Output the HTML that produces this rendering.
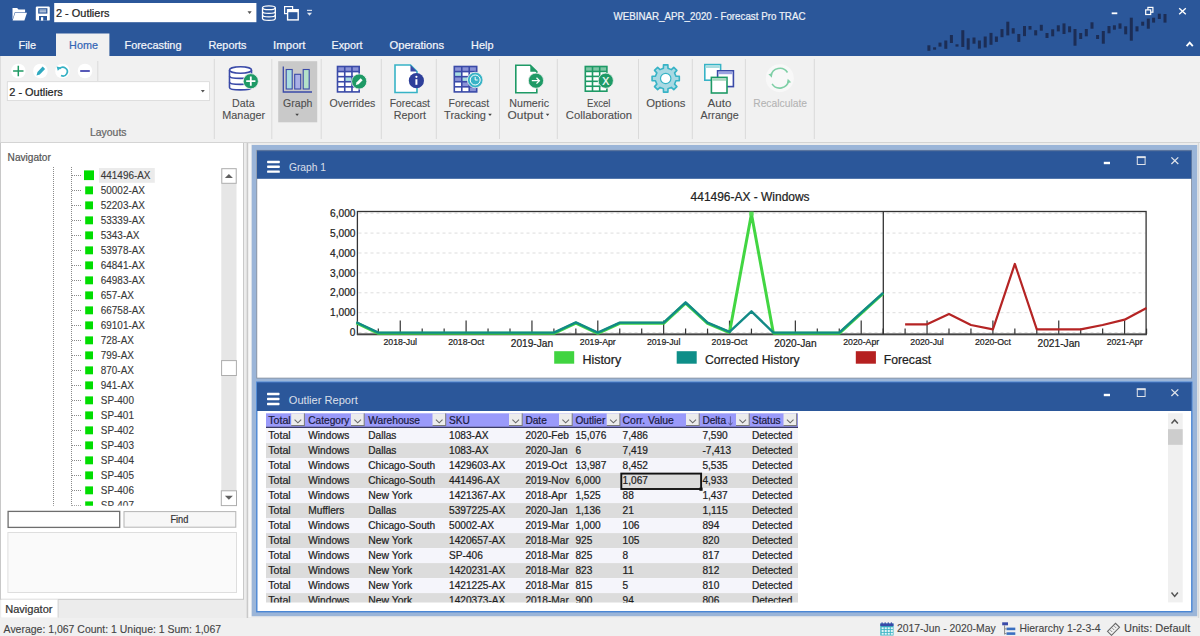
<!DOCTYPE html><html><head><meta charset="utf-8"><title>Forecast Pro TRAC</title><style>*{margin:0;padding:0}html,body{width:1200px;height:636px;overflow:hidden;background:#f0f0f0}svg{position:absolute;left:0;top:0;display:block}text{font-family:"Liberation Sans",sans-serif;white-space:pre}</style></head><body>
<svg width="1200" height="636" viewBox="0 0 1200 636">
<rect x="0" y="0" width="1200" height="56" fill="#2b579a"/>
<path d="M12.5,8 h4.6 l1.4,1.6 h6.6 v2.6 h-10.3 l-2.3,7.6 z" fill="#fff"/>
<path d="M15.2,12.8 h11.8 l-2.6,7.8 h-11.8 z" fill="#fff"/>
<rect x="35.8" y="6.6" width="14" height="14" fill="#ffffff" rx="1.2"/>
<rect x="38.2" y="8.2" width="9.2" height="5.4" fill="#2b579a"/>
<rect x="39.4" y="9.6" width="6.8" height="0.9" fill="#ffffff"/>
<rect x="39.4" y="11.4" width="6.8" height="0.9" fill="#ffffff"/>
<rect x="39" y="16" width="8" height="4.6" fill="#2b579a"/>
<rect x="41" y="17.2" width="2.2" height="3.4" fill="#ffffff"/>
<rect x="54.2" y="3" width="202.2" height="19.2" fill="#ffffff"/>
<text x="56" y="17.1" font-size="11" fill="#1e1e1e" stroke="#1e1e1e" stroke-width="0.22" textLength="53.5" lengthAdjust="spacingAndGlyphs">2 - Outliers</text>
<path d="M247.5,11.3 h4.2 l-2.1,2.6 z" fill="#555"/>
<g fill="none" stroke="#fff" stroke-width="1.3"><ellipse cx="268.9" cy="7.8" rx="6.4" ry="1.9"/><path d="M262.5,7.8 v10.6 c0,2.5 12.8,2.5 12.8,0 v-10.6"/><path d="M262.5,11.4 c0,2.5 12.8,2.5 12.8,0"/><path d="M262.5,14.9 c0,2.5 12.8,2.5 12.8,0"/></g>
<rect x="284.6" y="6.6" width="8" height="7" fill="none" stroke="#fff" stroke-width="1.2"/>
<rect x="286.9" y="9" width="12" height="11.6" fill="#ffffff"/>
<rect x="288.3" y="12.2" width="9.2" height="7" fill="#2b579a"/>
<rect x="307" y="9.8" width="5" height="1.1" fill="#dfe6f0"/>
<path d="M307,12.8 h5 l-2.5,3 z" fill="#dfe6f0"/>
<text x="613.5" y="19.7" font-size="11" fill="#eef2f8" stroke="#eef2f8" stroke-width="0.22" textLength="192" lengthAdjust="spacingAndGlyphs">WEBINAR_APR_2020 - Forecast Pro TRAC</text>
<rect x="1111.7" y="12.4" width="5.6" height="1.8" fill="#ffffff"/>
<g fill="none" stroke="#fff" stroke-width="1.2"><rect x="1147.9" y="7.4" width="5" height="4.8"/><rect x="1145.7" y="9.9" width="5" height="4.6" fill="#2b579a"/></g>
<path d="M1179.2,8.2 L1185.8,14.2 M1185.8,8.2 L1179.2,14.2" stroke="#fff" stroke-width="1.4"/>
<path d="M1186.6,46.2 L1189.7,42.6 L1192.8,46.2" fill="none" stroke="#fff" stroke-width="1.8"/>
<rect x="56" y="33.5" width="53.4" height="22.5" fill="#f1f1f1"/>
<text x="18.5" y="49" font-size="11.6" fill="#f4f6fa" stroke="#f4f6fa" stroke-width="0.22" textLength="17.6" lengthAdjust="spacingAndGlyphs">File</text>
<text x="69.1" y="49" font-size="11.6" fill="#3465b5" stroke="#3465b5" stroke-width="0.22" textLength="28.8" lengthAdjust="spacingAndGlyphs">Home</text>
<text x="124.5" y="49" font-size="11.6" fill="#f4f6fa" stroke="#f4f6fa" stroke-width="0.22" textLength="57" lengthAdjust="spacingAndGlyphs">Forecasting</text>
<text x="208.5" y="49" font-size="11.6" fill="#f4f6fa" stroke="#f4f6fa" stroke-width="0.22" textLength="38" lengthAdjust="spacingAndGlyphs">Reports</text>
<text x="273.1" y="49" font-size="11.6" fill="#f4f6fa" stroke="#f4f6fa" stroke-width="0.22" textLength="32.4" lengthAdjust="spacingAndGlyphs">Import</text>
<text x="331.5" y="49" font-size="11.6" fill="#f4f6fa" stroke="#f4f6fa" stroke-width="0.22" textLength="31" lengthAdjust="spacingAndGlyphs">Export</text>
<text x="389.5" y="49" font-size="11.6" fill="#f4f6fa" stroke="#f4f6fa" stroke-width="0.22" textLength="54.6" lengthAdjust="spacingAndGlyphs">Operations</text>
<text x="471.1" y="49" font-size="11.6" fill="#f4f6fa" stroke="#f4f6fa" stroke-width="0.22" textLength="22.4" lengthAdjust="spacingAndGlyphs">Help</text>
<g fill="#1c2d55">
<rect x="927.4" y="45.3" width="3" height="5.5"/>
<rect x="933.1" y="47.3" width="3" height="2.4"/>
<rect x="938.5" y="42.6" width="3" height="4.0"/>
<rect x="944.3" y="40.5" width="3" height="8.3"/>
<rect x="949.9" y="35" width="3" height="8.0"/>
<rect x="955.5" y="44.3" width="3" height="2.3"/>
<rect x="961.3" y="30.2" width="3" height="16.8"/>
<rect x="966.7" y="38.3" width="3" height="11.4"/>
<rect x="972.5" y="37.5" width="3" height="6.2"/>
<rect x="977.9" y="40.5" width="3" height="8.1"/>
<rect x="983.7" y="36.5" width="3" height="11.0"/>
<rect x="989.5" y="32.9" width="3" height="11.9"/>
<rect x="994.9" y="36.5" width="3" height="5.4"/>
<rect x="1000.5" y="29.1" width="3" height="8.1"/>
<rect x="1006.3" y="21.7" width="3" height="13.7"/>
<rect x="1011.7" y="28.2" width="3" height="5.4"/>
<rect x="1017.3" y="34" width="3" height="7.9"/>
<rect x="1023.0" y="26" width="3" height="10.1"/>
<rect x="1028.5" y="26" width="3" height="3.6"/>
<rect x="1034.2" y="30.2" width="3" height="5.2"/>
<rect x="1039.8" y="24.8" width="3" height="5.9"/>
<rect x="1045.5" y="33" width="3" height="5.0"/>
<rect x="1051.2" y="29.3" width="3" height="7.0"/>
<rect x="1056.8" y="25.3" width="3" height="6.1"/>
<rect x="1062.5" y="23.4" width="3" height="10.6"/>
<rect x="1068.1" y="26.3" width="3" height="6.0"/>
<rect x="1073.5" y="29" width="3" height="16.7"/>
<rect x="1079.2" y="33" width="3" height="6.0"/>
<rect x="1084.8" y="29" width="3" height="7.3"/>
<rect x="1090.5" y="22.3" width="3" height="6.4"/>
<rect x="1096.1" y="35" width="3" height="4.0"/>
<rect x="1101.8" y="31" width="3" height="12.7"/>
<rect x="1107.5" y="26" width="3" height="7.3"/>
<rect x="1112.9" y="25.3" width="3" height="4.4"/>
<rect x="1118.5" y="23.4" width="3" height="5.3"/>
<rect x="1124.2" y="26.3" width="3" height="8.0"/>
<rect x="1129.8" y="17.7" width="3" height="23.0"/>
<rect x="1135.5" y="26.3" width="3" height="5.1"/>
<rect x="1141.2" y="21.7" width="3" height="4.0"/>
<rect x="1146.8" y="18.6" width="3" height="10.1"/>
<rect x="1152.1" y="17.7" width="3" height="4.9"/>
<rect x="1157.8" y="13.7" width="3" height="5.3"/>
<rect x="1163.5" y="14" width="3" height="8.6"/>
</g>
<rect x="0" y="56" width="1200" height="87" fill="#f1f1f1"/>
<line x1="0" y1="142.5" x2="1200" y2="142.5" stroke="#d4d4d4" stroke-width="1"/>
<line x1="0.5" y1="56" x2="0.5" y2="142" stroke="#dcdcdc" stroke-width="1"/>
<line x1="214.3" y1="59" x2="214.3" y2="139" stroke="#dadada" stroke-width="1"/>
<line x1="271.8" y1="59" x2="271.8" y2="139" stroke="#dadada" stroke-width="1"/>
<line x1="321.2" y1="59" x2="321.2" y2="139" stroke="#dadada" stroke-width="1"/>
<line x1="381.3" y1="59" x2="381.3" y2="139" stroke="#dadada" stroke-width="1"/>
<line x1="436.3" y1="59" x2="436.3" y2="139" stroke="#dadada" stroke-width="1"/>
<line x1="499.5" y1="59" x2="499.5" y2="139" stroke="#dadada" stroke-width="1"/>
<line x1="557.3" y1="59" x2="557.3" y2="139" stroke="#dadada" stroke-width="1"/>
<line x1="638.5" y1="59" x2="638.5" y2="139" stroke="#dadada" stroke-width="1"/>
<line x1="692.3" y1="59" x2="692.3" y2="139" stroke="#dadada" stroke-width="1"/>
<line x1="745.4" y1="59" x2="745.4" y2="139" stroke="#dadada" stroke-width="1"/>
<line x1="814.3" y1="59" x2="814.3" y2="139" stroke="#dadada" stroke-width="1"/>
<line x1="97.8" y1="61" x2="97.8" y2="81" stroke="#dadada" stroke-width="1"/>
<circle cx="18.3" cy="71" r="7.3" fill="#fff"/>
<circle cx="40.4" cy="71" r="7.3" fill="#fff"/>
<circle cx="62.4" cy="71" r="7.3" fill="#fff"/>
<circle cx="85" cy="71" r="7.3" fill="#fff"/>
<path d="M18.3,65.8 v10.4 M13.1,71 h10.4" stroke="#1f9a64" stroke-width="1.5"/>
<path d="M36.5,75.6 l1,-3.6 l5.2,-5.4 l2.4,2.4 l-5.3,5.4 z" fill="#2fa9c0"/>
<path d="M61,75.6 A4.4,4.4 0 1 0 59.6,68.7" fill="none" stroke="#35b1c4" stroke-width="1.7"/><path d="M56.6,66.6 L61.4,67.4 L57.8,70.8 z" fill="#35b1c4"/>
<rect x="80.2" y="70.1" width="9.6" height="1.8" fill="#4547b0"/>
<rect x="7.3" y="81.7" width="202.2" height="18.9" fill="#fff" stroke="#d8d8d8" stroke-width="0.8"/>
<text x="9.3" y="96" font-size="11.2" fill="#1e1e1e" stroke="#1e1e1e" stroke-width="0.22" textLength="53.5" lengthAdjust="spacingAndGlyphs">2 - Outliers</text>
<path d="M200.8,90 h4 l-2,2.4 z" fill="#555"/>
<text x="90" y="136.2" font-size="11" fill="#666" stroke="#666" stroke-width="0.22" textLength="36.5" lengthAdjust="spacingAndGlyphs">Layouts</text>
<rect x="278.2" y="61.2" width="39" height="61.1" fill="#c9c9c9"/>
<text x="232.1" y="106.6" font-size="11" fill="#4e4e4e" stroke="#4e4e4e" stroke-width="0.1" textLength="22.49999999999999" lengthAdjust="spacingAndGlyphs">Data</text>
<text x="222.29999999999998" y="118.7" font-size="11" fill="#4e4e4e" stroke="#4e4e4e" stroke-width="0.1" textLength="42.8" lengthAdjust="spacingAndGlyphs">Manager</text>
<text x="283.1" y="106.6" font-size="11" fill="#4e4e4e" stroke="#4e4e4e" stroke-width="0.1" textLength="29.3" lengthAdjust="spacingAndGlyphs">Graph</text>
<path d="M295.3,113.8 h3.6 l-1.8,2.2 z" fill="#444"/>
<text x="329.6" y="106.6" font-size="11" fill="#4e4e4e" stroke="#4e4e4e" stroke-width="0.1" textLength="45.8" lengthAdjust="spacingAndGlyphs">Overrides</text>
<text x="389.8" y="106.6" font-size="11" fill="#4e4e4e" stroke="#4e4e4e" stroke-width="0.1" textLength="40.10000000000001" lengthAdjust="spacingAndGlyphs">Forecast</text>
<text x="393.8" y="118.7" font-size="11" fill="#4e4e4e" stroke="#4e4e4e" stroke-width="0.1" textLength="32.3" lengthAdjust="spacingAndGlyphs">Report</text>
<text x="448.6" y="106.6" font-size="11" fill="#4e4e4e" stroke="#4e4e4e" stroke-width="0.1" textLength="40.499999999999986" lengthAdjust="spacingAndGlyphs">Forecast</text>
<text x="444.1" y="118.7" font-size="11" fill="#4e4e4e" stroke="#4e4e4e" stroke-width="0.1" textLength="41.8" lengthAdjust="spacingAndGlyphs">Tracking</text>
<path d="M488.2,113.8 h3.6 l-1.8,2.2 z" fill="#444"/>
<text x="509.3" y="106.6" font-size="11" fill="#4e4e4e" stroke="#4e4e4e" stroke-width="0.1" textLength="39.800000000000054" lengthAdjust="spacingAndGlyphs">Numeric</text>
<text x="507.6" y="118.7" font-size="11" fill="#4e4e4e" stroke="#4e4e4e" stroke-width="0.1" textLength="35.8" lengthAdjust="spacingAndGlyphs">Output</text>
<path d="M545.8,113.8 h3.6 l-1.8,2.2 z" fill="#444"/>
<text x="587.1" y="106.6" font-size="11" fill="#4e4e4e" stroke="#4e4e4e" stroke-width="0.1" textLength="23.3" lengthAdjust="spacingAndGlyphs">Excel</text>
<text x="565.8000000000001" y="118.7" font-size="11" fill="#4e4e4e" stroke="#4e4e4e" stroke-width="0.1" textLength="66.3" lengthAdjust="spacingAndGlyphs">Collaboration</text>
<text x="646.3000000000001" y="106.6" font-size="11" fill="#4e4e4e" stroke="#4e4e4e" stroke-width="0.1" textLength="39.09999999999995" lengthAdjust="spacingAndGlyphs">Options</text>
<text x="707.6" y="106.6" font-size="11" fill="#4e4e4e" stroke="#4e4e4e" stroke-width="0.1" textLength="23.8" lengthAdjust="spacingAndGlyphs">Auto</text>
<text x="700.6" y="118.7" font-size="11" fill="#4e4e4e" stroke="#4e4e4e" stroke-width="0.1" textLength="38.199999999999974" lengthAdjust="spacingAndGlyphs">Arrange</text>
<text x="753.2" y="106.6" font-size="11" fill="#b4b4b4" stroke="#b4b4b4" stroke-width="0.1" textLength="53.90000000000002" lengthAdjust="spacingAndGlyphs">Recalculate</text>
<g fill="#fff" stroke="#3a4aa8" stroke-width="1.6"><path d="M229.5,70 v17.5 c0,3.2 22,3.2 22,0 v-17.5"/><ellipse cx="240.5" cy="70" rx="11" ry="3.2"/><path d="M229.5,76 c0,3.2 22,3.2 22,0 M229.5,82 c0,3.2 22,3.2 22,0" fill="none"/></g>
<circle cx="250.8" cy="81.2" r="7.6" fill="#1e9a66" stroke="#f1f1f1" stroke-width="0.8"/>
<path d="M250.8,76.6 v9.2 M246.2,81.2 h9.2" stroke="#fff" stroke-width="1.8"/>
<path d="M283.3,66.5 v25.5 h28.7" fill="none" stroke="#3a4aa8" stroke-width="1.3"/>
<rect x="286.2" y="69.5" width="6" height="19.5" fill="#a9dde0" stroke="#3a4aa8" stroke-width="1.1"/>
<rect x="294.7" y="74.3" width="6" height="14.7" fill="#aab0e6" stroke="#3a4aa8" stroke-width="1.1"/>
<rect x="303.2" y="69.5" width="6" height="19.5" fill="#b4e0c8" stroke="#3a4aa8" stroke-width="1.1"/>
<rect x="336.7" y="65.7" width="23.3" height="27" fill="#3a4aa8"/>
<rect x="338.30" y="67.30" width="5.63" height="3.48" fill="#8a92d6"/>
<rect x="345.53" y="67.30" width="5.63" height="3.48" fill="#8a92d6"/>
<rect x="352.77" y="67.30" width="5.63" height="3.48" fill="#8a92d6"/>
<rect x="338.30" y="72.38" width="5.63" height="3.48" fill="#fff"/>
<rect x="345.53" y="72.38" width="5.63" height="3.48" fill="#fff"/>
<rect x="352.77" y="72.38" width="5.63" height="3.48" fill="#fff"/>
<rect x="338.30" y="77.46" width="5.63" height="3.48" fill="#fff"/>
<rect x="345.53" y="77.46" width="5.63" height="3.48" fill="#a9dde0"/>
<rect x="352.77" y="77.46" width="5.63" height="3.48" fill="#fff"/>
<rect x="338.30" y="82.54" width="5.63" height="3.48" fill="#fff"/>
<rect x="345.53" y="82.54" width="5.63" height="3.48" fill="#fff"/>
<rect x="352.77" y="82.54" width="5.63" height="3.48" fill="#fff"/>
<rect x="338.30" y="87.62" width="5.63" height="3.48" fill="#fff"/>
<rect x="345.53" y="87.62" width="5.63" height="3.48" fill="#fff"/>
<rect x="352.77" y="87.62" width="5.63" height="3.48" fill="#fff"/>
<circle cx="359.2" cy="81.5" r="7.6" fill="#1e9a66" stroke="#f1f1f1" stroke-width="0.8"/>
<path d="M355.8,85 l0.8,-2.8 l4,-4 l2,2 l-4,4 z" fill="#fff"/>
<path d="M395,65 h15.5 l6.5,6.5 v21 h-22 z" fill="#fff" stroke="#37b3c6" stroke-width="1.6"/>
<path d="M410.5,65 v6.5 h6.5 z" fill="#3a4aa8"/>
<circle cx="416.4" cy="80.7" r="7.6" fill="#2e3f9a"/>
<rect x="415.4" y="79.2" width="2" height="5.6" fill="#fff"/>
<circle cx="416.4" cy="76.8" r="1.1" fill="#fff"/>
<rect x="453.5" y="65.7" width="24" height="27" fill="#3a4aa8"/>
<rect x="455.10" y="67.30" width="5.87" height="3.48" fill="#8a92d6"/>
<rect x="462.57" y="67.30" width="5.87" height="3.48" fill="#8a92d6"/>
<rect x="470.03" y="67.30" width="5.87" height="3.48" fill="#8a92d6"/>
<rect x="455.10" y="72.38" width="5.87" height="3.48" fill="#a9dde0"/>
<rect x="462.57" y="72.38" width="5.87" height="3.48" fill="#fff"/>
<rect x="470.03" y="72.38" width="5.87" height="3.48" fill="#fff"/>
<rect x="455.10" y="77.46" width="5.87" height="3.48" fill="#8a92d6"/>
<rect x="462.57" y="77.46" width="5.87" height="3.48" fill="#a9dde0"/>
<rect x="470.03" y="77.46" width="5.87" height="3.48" fill="#fff"/>
<rect x="455.10" y="82.54" width="5.87" height="3.48" fill="#fff"/>
<rect x="462.57" y="82.54" width="5.87" height="3.48" fill="#8a92d6"/>
<rect x="470.03" y="82.54" width="5.87" height="3.48" fill="#fff"/>
<rect x="455.10" y="87.62" width="5.87" height="3.48" fill="#fff"/>
<rect x="462.57" y="87.62" width="5.87" height="3.48" fill="#fff"/>
<rect x="470.03" y="87.62" width="5.87" height="3.48" fill="#8a92d6"/>
<circle cx="475.2" cy="80" r="7.8" fill="#37b3c6" stroke="#f1f1f1" stroke-width="0.8"/>
<circle cx="475.2" cy="80" r="5" fill="none" stroke="#fff" stroke-width="1"/>
<path d="M475.2,77 v3 h2.5" fill="none" stroke="#fff" stroke-width="1"/>
<path d="M515.8,65.2 h14.5 l6.5,6.5 v21 h-21 z" fill="#fff" stroke="#1e9a66" stroke-width="1.6"/>
<path d="M530.3,65.2 v6.5 h6.5 z" fill="#1e9a66"/>
<circle cx="536" cy="80.7" r="7.6" fill="#1e9a66" stroke="#f1f1f1" stroke-width="0.8"/>
<path d="M531.8,80.7 h7.5 M536.5,77.8 l2.9,2.9 l-2.9,2.9" fill="none" stroke="#fff" stroke-width="1.3"/>
<rect x="584.5" y="65.7" width="23.2" height="26.3" fill="#1e9a66"/>
<rect x="586.10" y="67.30" width="5.60" height="3.34" fill="#7fc6a6"/>
<rect x="593.30" y="67.30" width="5.60" height="3.34" fill="#7fc6a6"/>
<rect x="600.50" y="67.30" width="5.60" height="3.34" fill="#7fc6a6"/>
<rect x="586.10" y="72.24" width="5.60" height="3.34" fill="#fff"/>
<rect x="593.30" y="72.24" width="5.60" height="3.34" fill="#fff"/>
<rect x="600.50" y="72.24" width="5.60" height="3.34" fill="#fff"/>
<rect x="586.10" y="77.18" width="5.60" height="3.34" fill="#fff"/>
<rect x="593.30" y="77.18" width="5.60" height="3.34" fill="#fff"/>
<rect x="600.50" y="77.18" width="5.60" height="3.34" fill="#fff"/>
<rect x="586.10" y="82.12" width="5.60" height="3.34" fill="#fff"/>
<rect x="593.30" y="82.12" width="5.60" height="3.34" fill="#fff"/>
<rect x="600.50" y="82.12" width="5.60" height="3.34" fill="#fff"/>
<rect x="586.10" y="87.06" width="5.60" height="3.34" fill="#fff"/>
<rect x="593.30" y="87.06" width="5.60" height="3.34" fill="#fff"/>
<rect x="600.50" y="87.06" width="5.60" height="3.34" fill="#fff"/>
<circle cx="605.8" cy="80.7" r="7.6" fill="#1e9a66" stroke="#f1f1f1" stroke-width="0.8"/>
<text x="602.3" y="84.6" font-size="10" fill="#fff" stroke="#fff" stroke-width="0.22" textLength="7" lengthAdjust="spacingAndGlyphs">X</text>
<path d="M675.95,76.21 L679.32,76.30 L679.32,80.70 L675.95,80.79 L674.57,84.13 L676.89,86.58 L673.78,89.69 L671.33,87.37 L667.99,88.75 L667.90,92.12 L663.50,92.12 L663.41,88.75 L660.07,87.37 L657.62,89.69 L654.51,86.58 L656.83,84.13 L655.45,80.79 L652.08,80.70 L652.08,76.30 L655.45,76.21 L656.83,72.87 L654.51,70.42 L657.62,67.31 L660.07,69.63 L663.41,68.25 L663.50,64.88 L667.90,64.88 L667.99,68.25 L671.33,69.63 L673.78,67.31 L676.89,70.42 L674.57,72.87Z" fill="#a8d9e3" stroke="#37b3c6" stroke-width="1.6" stroke-linejoin="round"/>
<circle cx="665.7" cy="78.5" r="5.2" fill="#fff" stroke="#37b3c6" stroke-width="1.2"/>
<rect x="704.8" y="64.6" width="15.800000000000068" height="15.600000000000009" fill="#fff" stroke="#37b3c6" stroke-width="1.6"/>
<rect x="705.5999999999999" y="65.39999999999999" width="14.200000000000069" height="2.6" fill="#a9dde0"/>
<rect x="717.6" y="70.8" width="15.799999999999955" height="15.799999999999997" fill="#fff" stroke="#3a4aa8" stroke-width="1.6"/>
<rect x="718.4" y="71.6" width="14.199999999999955" height="2.6" fill="#9aa2e0"/>
<rect x="711.4" y="77.4" width="15.600000000000023" height="15.599999999999994" fill="#fff" stroke="#1e9a66" stroke-width="1.6"/>
<rect x="712.1999999999999" y="78.2" width="14.000000000000023" height="2.6" fill="#a8d8bf"/>
<circle cx="779.8" cy="78.2" r="14" fill="#f8f8f8"/>
<path d="M771,76 a9,9 0 0 1 16.5,-3.5 M788.6,80.4 a9,9 0 0 1 -16.5,3.5" fill="none" stroke="#7fcfa6" stroke-width="1.6"/>
<path d="M768.4,74.3 l4,-1 l-0.5,4.5 z M791.2,82.2 l-4,1 l0.5,-4.5 z" fill="#7fcfa6"/>
<rect x="0" y="143" width="244" height="475" fill="#ececec"/>
<rect x="0" y="143" width="243.8" height="456" fill="#ffffff"/>
<line x1="0.5" y1="143" x2="0.5" y2="599" stroke="#c8c8c8" stroke-width="1"/>
<line x1="243.6" y1="143" x2="243.6" y2="599" stroke="#c4c4c4" stroke-width="1"/>
<text x="7.6" y="160.7" font-size="10.3" fill="#555" stroke="#555" stroke-width="0.22" textLength="43.2" lengthAdjust="spacingAndGlyphs">Navigator</text>
<clipPath id="treeclip"><rect x="0" y="167" width="221" height="338.8"/></clipPath>
<g clip-path="url(#treeclip)">
<rect x="99" y="168" width="55.8" height="14.8" fill="#ebebeb"/>
<path d="M53.5,167 V506 M71.5,167 V506" stroke="#8a8a8a" stroke-width="1" stroke-dasharray="1,1"/>
<path d="M72,175.5 H82" stroke="#8a8a8a" stroke-width="1" stroke-dasharray="1,1"/>
<rect x="84" y="170.4" width="10" height="9.7" fill="#00dd00"/>
<text x="100.8" y="178.9" font-size="10.4" fill="#383838" stroke="#383838" stroke-width="0.12" textLength="49.7" lengthAdjust="spacingAndGlyphs">441496-AX</text>
<path d="M72,190.5 H82" stroke="#8a8a8a" stroke-width="1" stroke-dasharray="1,1"/>
<rect x="85.2" y="186.4" width="7.8" height="7.9" fill="#00dd00"/>
<text x="100.8" y="193.9" font-size="10.4" fill="#383838" stroke="#383838" stroke-width="0.12" textLength="44.18" lengthAdjust="spacingAndGlyphs">50002-AX</text>
<path d="M72,205.5 H82" stroke="#8a8a8a" stroke-width="1" stroke-dasharray="1,1"/>
<rect x="85.2" y="201.4" width="7.8" height="7.9" fill="#00dd00"/>
<text x="100.8" y="208.9" font-size="10.4" fill="#383838" stroke="#383838" stroke-width="0.12" textLength="44.18" lengthAdjust="spacingAndGlyphs">52203-AX</text>
<path d="M72,220.5 H82" stroke="#8a8a8a" stroke-width="1" stroke-dasharray="1,1"/>
<rect x="85.2" y="216.4" width="7.8" height="7.9" fill="#00dd00"/>
<text x="100.8" y="223.9" font-size="10.4" fill="#383838" stroke="#383838" stroke-width="0.12" textLength="44.18" lengthAdjust="spacingAndGlyphs">53339-AX</text>
<path d="M72,235.5 H82" stroke="#8a8a8a" stroke-width="1" stroke-dasharray="1,1"/>
<rect x="85.2" y="231.4" width="7.8" height="7.9" fill="#00dd00"/>
<text x="100.8" y="238.9" font-size="10.4" fill="#383838" stroke="#383838" stroke-width="0.12" textLength="38.65" lengthAdjust="spacingAndGlyphs">5343-AX</text>
<path d="M72,250.5 H82" stroke="#8a8a8a" stroke-width="1" stroke-dasharray="1,1"/>
<rect x="85.2" y="246.4" width="7.8" height="7.9" fill="#00dd00"/>
<text x="100.8" y="253.9" font-size="10.4" fill="#383838" stroke="#383838" stroke-width="0.12" textLength="44.18" lengthAdjust="spacingAndGlyphs">53978-AX</text>
<path d="M72,265.5 H82" stroke="#8a8a8a" stroke-width="1" stroke-dasharray="1,1"/>
<rect x="85.2" y="261.4" width="7.8" height="7.9" fill="#00dd00"/>
<text x="100.8" y="268.9" font-size="10.4" fill="#383838" stroke="#383838" stroke-width="0.12" textLength="44.18" lengthAdjust="spacingAndGlyphs">64841-AX</text>
<path d="M72,280.5 H82" stroke="#8a8a8a" stroke-width="1" stroke-dasharray="1,1"/>
<rect x="85.2" y="276.4" width="7.8" height="7.9" fill="#00dd00"/>
<text x="100.8" y="283.9" font-size="10.4" fill="#383838" stroke="#383838" stroke-width="0.12" textLength="44.18" lengthAdjust="spacingAndGlyphs">64983-AX</text>
<path d="M72,295.5 H82" stroke="#8a8a8a" stroke-width="1" stroke-dasharray="1,1"/>
<rect x="85.2" y="291.4" width="7.8" height="7.9" fill="#00dd00"/>
<text x="100.8" y="298.9" font-size="10.4" fill="#383838" stroke="#383838" stroke-width="0.12" textLength="33.13" lengthAdjust="spacingAndGlyphs">657-AX</text>
<path d="M72,310.5 H82" stroke="#8a8a8a" stroke-width="1" stroke-dasharray="1,1"/>
<rect x="85.2" y="306.4" width="7.8" height="7.9" fill="#00dd00"/>
<text x="100.8" y="313.9" font-size="10.4" fill="#383838" stroke="#383838" stroke-width="0.12" textLength="44.18" lengthAdjust="spacingAndGlyphs">66758-AX</text>
<path d="M72,325.5 H82" stroke="#8a8a8a" stroke-width="1" stroke-dasharray="1,1"/>
<rect x="85.2" y="321.4" width="7.8" height="7.9" fill="#00dd00"/>
<text x="100.8" y="328.9" font-size="10.4" fill="#383838" stroke="#383838" stroke-width="0.12" textLength="44.18" lengthAdjust="spacingAndGlyphs">69101-AX</text>
<path d="M72,340.5 H82" stroke="#8a8a8a" stroke-width="1" stroke-dasharray="1,1"/>
<rect x="85.2" y="336.4" width="7.8" height="7.9" fill="#00dd00"/>
<text x="100.8" y="343.9" font-size="10.4" fill="#383838" stroke="#383838" stroke-width="0.12" textLength="33.13" lengthAdjust="spacingAndGlyphs">728-AX</text>
<path d="M72,355.5 H82" stroke="#8a8a8a" stroke-width="1" stroke-dasharray="1,1"/>
<rect x="85.2" y="351.4" width="7.8" height="7.9" fill="#00dd00"/>
<text x="100.8" y="358.9" font-size="10.4" fill="#383838" stroke="#383838" stroke-width="0.12" textLength="33.13" lengthAdjust="spacingAndGlyphs">799-AX</text>
<path d="M72,370.5 H82" stroke="#8a8a8a" stroke-width="1" stroke-dasharray="1,1"/>
<rect x="85.2" y="366.4" width="7.8" height="7.9" fill="#00dd00"/>
<text x="100.8" y="373.9" font-size="10.4" fill="#383838" stroke="#383838" stroke-width="0.12" textLength="33.13" lengthAdjust="spacingAndGlyphs">870-AX</text>
<path d="M72,385.5 H82" stroke="#8a8a8a" stroke-width="1" stroke-dasharray="1,1"/>
<rect x="85.2" y="381.4" width="7.8" height="7.9" fill="#00dd00"/>
<text x="100.8" y="388.9" font-size="10.4" fill="#383838" stroke="#383838" stroke-width="0.12" textLength="33.13" lengthAdjust="spacingAndGlyphs">941-AX</text>
<path d="M72,400.5 H82" stroke="#8a8a8a" stroke-width="1" stroke-dasharray="1,1"/>
<rect x="85.2" y="396.4" width="7.8" height="7.9" fill="#00dd00"/>
<text x="100.8" y="403.9" font-size="10.4" fill="#383838" stroke="#383838" stroke-width="0.12" textLength="33.13" lengthAdjust="spacingAndGlyphs">SP-400</text>
<path d="M72,415.5 H82" stroke="#8a8a8a" stroke-width="1" stroke-dasharray="1,1"/>
<rect x="85.2" y="411.4" width="7.8" height="7.9" fill="#00dd00"/>
<text x="100.8" y="418.9" font-size="10.4" fill="#383838" stroke="#383838" stroke-width="0.12" textLength="33.13" lengthAdjust="spacingAndGlyphs">SP-401</text>
<path d="M72,430.5 H82" stroke="#8a8a8a" stroke-width="1" stroke-dasharray="1,1"/>
<rect x="85.2" y="426.4" width="7.8" height="7.9" fill="#00dd00"/>
<text x="100.8" y="433.9" font-size="10.4" fill="#383838" stroke="#383838" stroke-width="0.12" textLength="33.13" lengthAdjust="spacingAndGlyphs">SP-402</text>
<path d="M72,445.5 H82" stroke="#8a8a8a" stroke-width="1" stroke-dasharray="1,1"/>
<rect x="85.2" y="441.4" width="7.8" height="7.9" fill="#00dd00"/>
<text x="100.8" y="448.9" font-size="10.4" fill="#383838" stroke="#383838" stroke-width="0.12" textLength="33.13" lengthAdjust="spacingAndGlyphs">SP-403</text>
<path d="M72,460.5 H82" stroke="#8a8a8a" stroke-width="1" stroke-dasharray="1,1"/>
<rect x="85.2" y="456.4" width="7.8" height="7.9" fill="#00dd00"/>
<text x="100.8" y="463.9" font-size="10.4" fill="#383838" stroke="#383838" stroke-width="0.12" textLength="33.13" lengthAdjust="spacingAndGlyphs">SP-404</text>
<path d="M72,475.5 H82" stroke="#8a8a8a" stroke-width="1" stroke-dasharray="1,1"/>
<rect x="85.2" y="471.4" width="7.8" height="7.9" fill="#00dd00"/>
<text x="100.8" y="478.9" font-size="10.4" fill="#383838" stroke="#383838" stroke-width="0.12" textLength="33.13" lengthAdjust="spacingAndGlyphs">SP-405</text>
<path d="M72,490.5 H82" stroke="#8a8a8a" stroke-width="1" stroke-dasharray="1,1"/>
<rect x="85.2" y="486.4" width="7.8" height="7.9" fill="#00dd00"/>
<text x="100.8" y="493.9" font-size="10.4" fill="#383838" stroke="#383838" stroke-width="0.12" textLength="33.13" lengthAdjust="spacingAndGlyphs">SP-406</text>
<path d="M72,505.5 H82" stroke="#8a8a8a" stroke-width="1" stroke-dasharray="1,1"/>
<rect x="85.2" y="501.4" width="7.8" height="7.9" fill="#00dd00"/>
<text x="100.8" y="508.9" font-size="10.4" fill="#383838" stroke="#383838" stroke-width="0.12" textLength="33.13" lengthAdjust="spacingAndGlyphs">SP-407</text>
</g>
<rect x="221.3" y="168.2" width="15.2" height="337.6" fill="#e6e6e6"/>
<rect x="221.8" y="168.7" width="14.4" height="14.6" fill="#fff" stroke="#adadad" stroke-width="1"/>
<path d="M224.9,177.9 h8 l-4,-4 z" fill="#606060"/>
<rect x="221.6" y="360.6" width="14.8" height="14.9" fill="#fff" stroke="#adadad" stroke-width="1"/>
<rect x="221.3" y="490.8" width="15.2" height="14.8" fill="#fff" stroke="#adadad" stroke-width="1"/>
<path d="M224.9,495.8 h8 l-4,4 z" fill="#606060"/>
<rect x="8.1" y="511.4" width="111.6" height="16" fill="#fff" stroke="#6e6e6e" stroke-width="1.3"/>
<rect x="124" y="511.6" width="111.8" height="15.6" fill="#f7f7f7" stroke="#b4b4b4" stroke-width="1"/>
<text x="170.4" y="522.7" font-size="10.4" fill="#333" stroke="#333" stroke-width="0.22" textLength="18" lengthAdjust="spacingAndGlyphs">Find</text>
<rect x="7.9" y="532.5" width="228.6" height="60" fill="#fafafa" stroke="#dedede" stroke-width="1"/>
<line x1="0" y1="599.3" x2="244" y2="599.3" stroke="#c8c8c8" stroke-width="1"/>
<rect x="1.2" y="599.5" width="56.9" height="18" fill="#fff"/>
<line x1="58.1" y1="599.5" x2="58.1" y2="617.5" stroke="#d0d0d0" stroke-width="1"/>
<text x="5.2" y="612.5" font-size="10.8" fill="#333" stroke="#333" stroke-width="0.22" textLength="47.3" lengthAdjust="spacingAndGlyphs">Navigator</text>
<rect x="244" y="143" width="956" height="475" fill="#ececec"/>
<line x1="247.4" y1="143" x2="247.4" y2="618" stroke="#c9c9c9" stroke-width="1.5"/>
<rect x="248.6" y="144" width="2.8" height="473" fill="#f7f7f7"/>
<rect x="251.7" y="145" width="945.5" height="471.2" fill="#9bb5d8"/>
<line x1="1198.4" y1="143" x2="1198.4" y2="618" stroke="#d8d8d8" stroke-width="1"/>
<rect x="256.8" y="150.3" width="934.8" height="227.8" fill="#ffffff" stroke="#7d8796" stroke-width="0.8"/>
<rect x="257" y="150.5" width="934.5" height="28.3" fill="#2b579a"/>
<line x1="257" y1="150.8" x2="1191.5" y2="150.8" stroke="#56709a" stroke-width="0.8"/>
<rect x="267.1" y="160.8" width="12.7" height="2.4" fill="#fff" rx="0.6"/>
<rect x="267.1" y="165.55" width="12.7" height="2.4" fill="#fff" rx="0.6"/>
<rect x="267.1" y="170.4" width="12.7" height="2.4" fill="#fff" rx="0.6"/>
<text x="289" y="170.9" font-size="10.3" fill="#d8dee8" stroke="#d8dee8" stroke-width="0.05" textLength="37" lengthAdjust="spacingAndGlyphs">Graph 1</text>
<rect x="1103.8" y="161.8" width="6.2" height="2.4" fill="#fff"/>
<rect x="1137.3" y="157" width="7.8" height="7.5" fill="none" stroke="#dfe3ea" stroke-width="1"/>
<rect x="1136.8" y="156.3" width="8.8" height="1.8" fill="#dfe3ea"/>
<path d="M1171.4,157.4 L1178.3,164 M1178.3,157.4 L1171.4,164" stroke="#dfe3ea" stroke-width="1.3"/>
<text x="690.6" y="200.5" font-size="12" fill="#222" stroke="#222" stroke-width="0.22" textLength="119" lengthAdjust="spacingAndGlyphs">441496-AX - Windows</text>
<line x1="358.5" y1="332.60" x2="1145.5" y2="332.60" stroke="#d9d9d9" stroke-width="0.9" stroke-dasharray="3,3"/>
<line x1="358.5" y1="312.70" x2="1145.5" y2="312.70" stroke="#d9d9d9" stroke-width="0.9" stroke-dasharray="3,3"/>
<line x1="358.5" y1="292.80" x2="1145.5" y2="292.80" stroke="#d9d9d9" stroke-width="0.9" stroke-dasharray="3,3"/>
<line x1="358.5" y1="272.90" x2="1145.5" y2="272.90" stroke="#d9d9d9" stroke-width="0.9" stroke-dasharray="3,3"/>
<line x1="358.5" y1="253.00" x2="1145.5" y2="253.00" stroke="#d9d9d9" stroke-width="0.9" stroke-dasharray="3,3"/>
<line x1="358.5" y1="233.10" x2="1145.5" y2="233.10" stroke="#d9d9d9" stroke-width="0.9" stroke-dasharray="3,3"/>
<line x1="358.5" y1="213.20" x2="1145.5" y2="213.20" stroke="#d9d9d9" stroke-width="0.9" stroke-dasharray="3,3"/>
<text x="355.5" y="336.2" font-size="10.5" fill="#222" stroke="#222" stroke-width="0.22" text-anchor="end" textLength="5.66" lengthAdjust="spacingAndGlyphs">0</text>
<text x="355.5" y="316.3" font-size="10.5" fill="#222" stroke="#222" stroke-width="0.22" text-anchor="end" textLength="25.49" lengthAdjust="spacingAndGlyphs">1,000</text>
<text x="355.5" y="296.4" font-size="10.5" fill="#222" stroke="#222" stroke-width="0.22" text-anchor="end" textLength="25.49" lengthAdjust="spacingAndGlyphs">2,000</text>
<text x="355.5" y="276.5" font-size="10.5" fill="#222" stroke="#222" stroke-width="0.22" text-anchor="end" textLength="25.49" lengthAdjust="spacingAndGlyphs">3,000</text>
<text x="355.5" y="256.6" font-size="10.5" fill="#222" stroke="#222" stroke-width="0.22" text-anchor="end" textLength="25.49" lengthAdjust="spacingAndGlyphs">4,000</text>
<text x="355.5" y="236.7" font-size="10.5" fill="#222" stroke="#222" stroke-width="0.22" text-anchor="end" textLength="25.49" lengthAdjust="spacingAndGlyphs">5,000</text>
<text x="355.5" y="216.8" font-size="10.5" fill="#222" stroke="#222" stroke-width="0.22" text-anchor="end" textLength="25.49" lengthAdjust="spacingAndGlyphs">6,000</text>
<line x1="378.30" y1="328.6" x2="378.30" y2="334" stroke="#333" stroke-width="1.2"/>
<line x1="400.25" y1="320.6" x2="400.25" y2="334" stroke="#333" stroke-width="1.2"/>
<line x1="422.20" y1="328.6" x2="422.20" y2="334" stroke="#333" stroke-width="1.2"/>
<line x1="444.15" y1="328.6" x2="444.15" y2="334" stroke="#333" stroke-width="1.2"/>
<line x1="466.10" y1="320.6" x2="466.10" y2="334" stroke="#333" stroke-width="1.2"/>
<line x1="488.05" y1="328.6" x2="488.05" y2="334" stroke="#333" stroke-width="1.2"/>
<line x1="510.00" y1="328.6" x2="510.00" y2="334" stroke="#333" stroke-width="1.2"/>
<line x1="531.95" y1="320.6" x2="531.95" y2="334" stroke="#333" stroke-width="1.2"/>
<line x1="553.90" y1="328.6" x2="553.90" y2="334" stroke="#333" stroke-width="1.2"/>
<line x1="575.85" y1="328.6" x2="575.85" y2="334" stroke="#333" stroke-width="1.2"/>
<line x1="597.80" y1="320.6" x2="597.80" y2="334" stroke="#333" stroke-width="1.2"/>
<line x1="619.75" y1="328.6" x2="619.75" y2="334" stroke="#333" stroke-width="1.2"/>
<line x1="641.70" y1="328.6" x2="641.70" y2="334" stroke="#333" stroke-width="1.2"/>
<line x1="663.65" y1="320.6" x2="663.65" y2="334" stroke="#333" stroke-width="1.2"/>
<line x1="685.60" y1="328.6" x2="685.60" y2="334" stroke="#333" stroke-width="1.2"/>
<line x1="707.55" y1="328.6" x2="707.55" y2="334" stroke="#333" stroke-width="1.2"/>
<line x1="729.50" y1="320.6" x2="729.50" y2="334" stroke="#333" stroke-width="1.2"/>
<line x1="751.45" y1="328.6" x2="751.45" y2="334" stroke="#333" stroke-width="1.2"/>
<line x1="773.40" y1="328.6" x2="773.40" y2="334" stroke="#333" stroke-width="1.2"/>
<line x1="795.35" y1="320.6" x2="795.35" y2="334" stroke="#333" stroke-width="1.2"/>
<line x1="817.30" y1="328.6" x2="817.30" y2="334" stroke="#333" stroke-width="1.2"/>
<line x1="839.25" y1="328.6" x2="839.25" y2="334" stroke="#333" stroke-width="1.2"/>
<line x1="861.20" y1="320.6" x2="861.20" y2="334" stroke="#333" stroke-width="1.2"/>
<line x1="883.15" y1="328.6" x2="883.15" y2="334" stroke="#333" stroke-width="1.2"/>
<line x1="905.10" y1="328.6" x2="905.10" y2="334" stroke="#333" stroke-width="1.2"/>
<line x1="927.05" y1="320.6" x2="927.05" y2="334" stroke="#333" stroke-width="1.2"/>
<line x1="949.00" y1="328.6" x2="949.00" y2="334" stroke="#333" stroke-width="1.2"/>
<line x1="970.95" y1="328.6" x2="970.95" y2="334" stroke="#333" stroke-width="1.2"/>
<line x1="992.90" y1="320.6" x2="992.90" y2="334" stroke="#333" stroke-width="1.2"/>
<line x1="1014.85" y1="328.6" x2="1014.85" y2="334" stroke="#333" stroke-width="1.2"/>
<line x1="1036.80" y1="328.6" x2="1036.80" y2="334" stroke="#333" stroke-width="1.2"/>
<line x1="1058.75" y1="320.6" x2="1058.75" y2="334" stroke="#333" stroke-width="1.2"/>
<line x1="1080.70" y1="328.6" x2="1080.70" y2="334" stroke="#333" stroke-width="1.2"/>
<line x1="1102.65" y1="328.6" x2="1102.65" y2="334" stroke="#333" stroke-width="1.2"/>
<line x1="1124.60" y1="320.6" x2="1124.60" y2="334" stroke="#333" stroke-width="1.2"/>
<line x1="1146.55" y1="328.6" x2="1146.55" y2="334" stroke="#333" stroke-width="1.2"/>
<rect x="357.4" y="211.5" width="788.7" height="122.9" fill="none" stroke="#333" stroke-width="1.3"/>
<line x1="357" y1="334.4" x2="1146.8" y2="334.4" stroke="#444" stroke-width="1.9"/>
<line x1="883.3" y1="211.5" x2="883.3" y2="334.4" stroke="#333" stroke-width="1.3"/>
<text x="400.25" y="345" font-size="9.2" fill="#222" stroke="#222" stroke-width="0.22" text-anchor="middle" textLength="33.53" lengthAdjust="spacingAndGlyphs">2018-Jul</text>
<text x="466.1" y="345" font-size="9.2" fill="#222" stroke="#222" stroke-width="0.22" text-anchor="middle" textLength="35.95" lengthAdjust="spacingAndGlyphs">2018-Oct</text>
<text x="531.95" y="346.5" font-size="10.6" fill="#222" stroke="#222" stroke-width="0.22" text-anchor="middle" textLength="42.43" lengthAdjust="spacingAndGlyphs">2019-Jan</text>
<text x="597.8" y="345" font-size="9.2" fill="#222" stroke="#222" stroke-width="0.22" text-anchor="middle" textLength="35.95" lengthAdjust="spacingAndGlyphs">2019-Apr</text>
<text x="663.65" y="345" font-size="9.2" fill="#222" stroke="#222" stroke-width="0.22" text-anchor="middle" textLength="33.53" lengthAdjust="spacingAndGlyphs">2019-Jul</text>
<text x="729.5" y="345" font-size="9.2" fill="#222" stroke="#222" stroke-width="0.22" text-anchor="middle" textLength="35.95" lengthAdjust="spacingAndGlyphs">2019-Oct</text>
<text x="795.35" y="346.5" font-size="10.6" fill="#222" stroke="#222" stroke-width="0.22" text-anchor="middle" textLength="42.43" lengthAdjust="spacingAndGlyphs">2020-Jan</text>
<text x="861.2" y="345" font-size="9.2" fill="#222" stroke="#222" stroke-width="0.22" text-anchor="middle" textLength="35.95" lengthAdjust="spacingAndGlyphs">2020-Apr</text>
<text x="927.05" y="345" font-size="9.2" fill="#222" stroke="#222" stroke-width="0.22" text-anchor="middle" textLength="33.53" lengthAdjust="spacingAndGlyphs">2020-Jul</text>
<text x="992.9" y="345" font-size="9.2" fill="#222" stroke="#222" stroke-width="0.22" text-anchor="middle" textLength="35.95" lengthAdjust="spacingAndGlyphs">2020-Oct</text>
<text x="1058.75" y="346.5" font-size="10.6" fill="#222" stroke="#222" stroke-width="0.22" text-anchor="middle" textLength="42.43" lengthAdjust="spacingAndGlyphs">2021-Jan</text>
<text x="1124.6" y="345" font-size="9.2" fill="#222" stroke="#222" stroke-width="0.22" text-anchor="middle" textLength="35.95" lengthAdjust="spacingAndGlyphs">2021-Apr</text>
<polyline points="356.35,322.25 378.30,332.60 400.25,332.60 422.20,332.60 444.15,332.60 466.10,332.60 488.05,332.60 510.00,332.60 531.95,332.60 553.90,332.60 575.85,322.45 597.80,332.60 619.75,322.65 641.70,322.65 663.65,322.65 685.60,302.35 707.55,322.65 729.50,331.80 751.45,213.20 773.40,332.60 795.35,332.60 817.30,332.60 839.25,332.60 861.20,312.70 883.15,292.80" transform="translate(0,0.7)" fill="none" stroke="#42d642" stroke-width="3" stroke-linejoin="bevel"/>
<polyline points="356.35,322.25 378.30,332.60 400.25,332.60 422.20,332.60 444.15,332.60 466.10,332.60 488.05,332.60 510.00,332.60 531.95,332.60 553.90,332.60 575.85,322.45 597.80,332.60 619.75,322.65 641.70,322.65 663.65,322.65 685.60,302.35 707.55,322.65 729.50,331.80 751.45,311.37 773.40,332.60 795.35,332.60 817.30,332.60 839.25,332.60 861.20,312.70 883.15,292.80" fill="none" stroke="#128a86" stroke-width="2.4" stroke-linejoin="round"/>
<polyline points="905.10,324.36 927.05,324.36 949.00,314.09 970.95,325.04 992.90,329.42 1014.85,263.95 1036.80,329.42 1058.75,329.42 1080.70,329.42 1102.65,325.04 1124.60,319.67 1146.55,308.00" fill="none" stroke="#b52424" stroke-width="2.2" stroke-linejoin="round"/>
<rect x="749.25" y="211.6" width="4.4" height="4" fill="#55dc55"/>
<rect x="554.2" y="351.2" width="20" height="12.5" fill="#40d440"/>
<text x="582.4" y="363.5" font-size="12" fill="#222" stroke="#222" stroke-width="0.22" textLength="38.8" lengthAdjust="spacingAndGlyphs">History</text>
<rect x="676.7" y="351.2" width="20" height="12.5" fill="#0e8e88"/>
<text x="705" y="363.5" font-size="12" fill="#222" stroke="#222" stroke-width="0.22" textLength="94.6" lengthAdjust="spacingAndGlyphs">Corrected History</text>
<rect x="855.8" y="351.2" width="20.1" height="12.5" fill="#b52020"/>
<text x="883.7" y="363.5" font-size="12" fill="#222" stroke="#222" stroke-width="0.22" textLength="47.5" lengthAdjust="spacingAndGlyphs">Forecast</text>
<rect x="256.8" y="382.2" width="935" height="229.5" fill="#ffffff" stroke="#4a86d4" stroke-width="1.4"/>
<rect x="257" y="382.2" width="934.6" height="28.8" fill="#2b579a"/>
<line x1="257" y1="382.6" x2="1191.6" y2="382.6" stroke="#3f6fb8" stroke-width="0.8"/>
<rect x="267" y="392.8" width="12.5" height="2.4" fill="#fff" rx="0.6"/>
<rect x="267" y="397.8" width="12.5" height="2.4" fill="#fff" rx="0.6"/>
<rect x="267" y="402.8" width="12.5" height="2.4" fill="#fff" rx="0.6"/>
<text x="288.8" y="403.8" font-size="11" fill="#d8dee8" stroke="#d8dee8" stroke-width="0.05" textLength="69" lengthAdjust="spacingAndGlyphs">Outlier Report</text>
<rect x="1103.8" y="393.8" width="6.2" height="2.4" fill="#fff"/>
<rect x="1137.3" y="389" width="7.8" height="7.5" fill="none" stroke="#dfe3ea" stroke-width="1"/>
<rect x="1136.8" y="388.3" width="8.8" height="1.8" fill="#dfe3ea"/>
<path d="M1171.4,389.4 L1178.3,396 M1178.3,389.4 L1171.4,396" stroke="#dfe3ea" stroke-width="1.3"/>
<clipPath id="tblclip"><rect x="257" y="411" width="905" height="191.6"/></clipPath>
<g clip-path="url(#tblclip)">
<rect x="266" y="413.3" width="532" height="13.6" fill="#9a9afa"/>
<rect x="266" y="426.7" width="532" height="1.4" fill="#3a3a66"/>
<text x="268.2" y="423.6" font-size="10.4" fill="#1a1a40" stroke="#1a1a40" stroke-width="0.22" textLength="22.54" lengthAdjust="spacingAndGlyphs">Total</text>
<rect x="291.2" y="413.4" width="13.2" height="12.3" fill="#ececec"/>
<line x1="304.4" y1="413.4" x2="304.4" y2="425.9" stroke="#7a7a7a" stroke-width="1"/>
<line x1="291.2" y1="425.5" x2="304.59999999999997" y2="425.5" stroke="#7a7a7a" stroke-width="1"/>
<path d="M294.6,419.6 L297.9,422.8 L301.2,419.6" fill="none" stroke="#6a6a6a" stroke-width="1.1"/>
<text x="308.3" y="423.6" font-size="10.4" fill="#1a1a40" stroke="#1a1a40" stroke-width="0.22" textLength="41.14" lengthAdjust="spacingAndGlyphs">Category</text>
<rect x="351" y="413.4" width="13.2" height="12.3" fill="#ececec"/>
<line x1="364.2" y1="413.4" x2="364.2" y2="425.9" stroke="#7a7a7a" stroke-width="1"/>
<line x1="351" y1="425.5" x2="364.4" y2="425.5" stroke="#7a7a7a" stroke-width="1"/>
<path d="M354.4,419.6 L357.7,422.8 L361.0,419.6" fill="none" stroke="#6a6a6a" stroke-width="1.1"/>
<text x="368.2" y="423.6" font-size="10.4" fill="#1a1a40" stroke="#1a1a40" stroke-width="0.22" textLength="51.85" lengthAdjust="spacingAndGlyphs">Warehouse</text>
<rect x="432.5" y="413.4" width="13.2" height="12.3" fill="#ececec"/>
<line x1="445.7" y1="413.4" x2="445.7" y2="425.9" stroke="#7a7a7a" stroke-width="1"/>
<line x1="432.5" y1="425.5" x2="445.9" y2="425.5" stroke="#7a7a7a" stroke-width="1"/>
<path d="M435.9,419.6 L439.2,422.8 L442.5,419.6" fill="none" stroke="#6a6a6a" stroke-width="1.1"/>
<text x="449" y="423.6" font-size="10.4" fill="#1a1a40" stroke="#1a1a40" stroke-width="0.22" textLength="20.85" lengthAdjust="spacingAndGlyphs">SKU</text>
<rect x="509" y="413.4" width="13.2" height="12.3" fill="#ececec"/>
<line x1="522.2" y1="413.4" x2="522.2" y2="425.9" stroke="#7a7a7a" stroke-width="1"/>
<line x1="509" y1="425.5" x2="522.4" y2="425.5" stroke="#7a7a7a" stroke-width="1"/>
<path d="M512.4,419.6 L515.7,422.8 L519.0,419.6" fill="none" stroke="#6a6a6a" stroke-width="1.1"/>
<text x="525.4" y="423.6" font-size="10.4" fill="#1a1a40" stroke="#1a1a40" stroke-width="0.22" textLength="21.42" lengthAdjust="spacingAndGlyphs">Date</text>
<rect x="559" y="413.4" width="13.2" height="12.3" fill="#ececec"/>
<line x1="572.2" y1="413.4" x2="572.2" y2="425.9" stroke="#7a7a7a" stroke-width="1"/>
<line x1="559" y1="425.5" x2="572.4" y2="425.5" stroke="#7a7a7a" stroke-width="1"/>
<path d="M562.4,419.6 L565.7,422.8 L569.0,419.6" fill="none" stroke="#6a6a6a" stroke-width="1.1"/>
<text x="575.4" y="423.6" font-size="10.4" fill="#1a1a40" stroke="#1a1a40" stroke-width="0.22" textLength="29.87" lengthAdjust="spacingAndGlyphs">Outlier</text>
<rect x="606.7" y="413.4" width="13.2" height="12.3" fill="#ececec"/>
<line x1="619.9000000000001" y1="413.4" x2="619.9000000000001" y2="425.9" stroke="#7a7a7a" stroke-width="1"/>
<line x1="606.7" y1="425.5" x2="620.1" y2="425.5" stroke="#7a7a7a" stroke-width="1"/>
<path d="M610.1,419.6 L613.4,422.8 L616.7,419.6" fill="none" stroke="#6a6a6a" stroke-width="1.1"/>
<text x="622.6" y="423.6" font-size="10.4" fill="#1a1a40" stroke="#1a1a40" stroke-width="0.22" textLength="51.28" lengthAdjust="spacingAndGlyphs">Corr. Value</text>
<rect x="686" y="413.4" width="13.2" height="12.3" fill="#ececec"/>
<line x1="699.2" y1="413.4" x2="699.2" y2="425.9" stroke="#7a7a7a" stroke-width="1"/>
<line x1="686" y1="425.5" x2="699.4" y2="425.5" stroke="#7a7a7a" stroke-width="1"/>
<path d="M689.4,419.6 L692.7,422.8 L696.0,419.6" fill="none" stroke="#6a6a6a" stroke-width="1.1"/>
<text x="702.4" y="423.6" font-size="10.4" fill="#1a1a40" stroke="#1a1a40" stroke-width="0.22" textLength="23.67" lengthAdjust="spacingAndGlyphs">Delta</text>
<rect x="736" y="413.4" width="13.2" height="12.3" fill="#ececec"/>
<line x1="749.2" y1="413.4" x2="749.2" y2="425.9" stroke="#7a7a7a" stroke-width="1"/>
<line x1="736" y1="425.5" x2="749.4" y2="425.5" stroke="#7a7a7a" stroke-width="1"/>
<path d="M739.4,419.6 L742.7,422.8 L746.0,419.6" fill="none" stroke="#6a6a6a" stroke-width="1.1"/>
<text x="751.9" y="423.6" font-size="10.4" fill="#1a1a40" stroke="#1a1a40" stroke-width="0.22" textLength="28.75" lengthAdjust="spacingAndGlyphs">Status</text>
<rect x="783.5" y="413.4" width="13.2" height="12.3" fill="#ececec"/>
<line x1="796.7" y1="413.4" x2="796.7" y2="425.9" stroke="#7a7a7a" stroke-width="1"/>
<line x1="783.5" y1="425.5" x2="796.9" y2="425.5" stroke="#7a7a7a" stroke-width="1"/>
<path d="M786.9,419.6 L790.2,422.8 L793.5,419.6" fill="none" stroke="#6a6a6a" stroke-width="1.1"/>
<rect x="266" y="428.1" width="532" height="15" fill="#f5f5fb"/>
<text x="268.2" y="438.8" font-size="10.4" fill="#1e1e1e" stroke="#1e1e1e" stroke-width="0.22" textLength="22.54" lengthAdjust="spacingAndGlyphs">Total</text>
<text x="308.3" y="438.8" font-size="10.4" fill="#1e1e1e" stroke="#1e1e1e" stroke-width="0.22" textLength="41.13" lengthAdjust="spacingAndGlyphs">Windows</text>
<text x="368.2" y="438.8" font-size="10.4" fill="#1e1e1e" stroke="#1e1e1e" stroke-width="0.22" textLength="28.18" lengthAdjust="spacingAndGlyphs">Dallas</text>
<text x="449" y="438.8" font-size="10.4" fill="#1e1e1e" stroke="#1e1e1e" stroke-width="0.22" textLength="39.46" lengthAdjust="spacingAndGlyphs">1083-AX</text>
<text x="525.4" y="438.8" font-size="10.4" fill="#1e1e1e" stroke="#1e1e1e" stroke-width="0.22" textLength="43.41" lengthAdjust="spacingAndGlyphs">2020-Feb</text>
<text x="575.4" y="438.8" font-size="10.4" fill="#1e1e1e" stroke="#1e1e1e" stroke-width="0.22" textLength="31.01" lengthAdjust="spacingAndGlyphs">15,076</text>
<text x="622.6" y="438.8" font-size="10.4" fill="#1e1e1e" stroke="#1e1e1e" stroke-width="0.22" textLength="25.37" lengthAdjust="spacingAndGlyphs">7,486</text>
<text x="702.4" y="438.8" font-size="10.4" fill="#1e1e1e" stroke="#1e1e1e" stroke-width="0.22" textLength="25.37" lengthAdjust="spacingAndGlyphs">7,590</text>
<text x="751.9" y="438.8" font-size="10.4" fill="#1e1e1e" stroke="#1e1e1e" stroke-width="0.22" textLength="40.58" lengthAdjust="spacingAndGlyphs">Detected</text>
<rect x="266" y="443.1" width="532" height="15" fill="#dcdcdc"/>
<text x="268.2" y="453.8" font-size="10.4" fill="#1e1e1e" stroke="#1e1e1e" stroke-width="0.22" textLength="22.54" lengthAdjust="spacingAndGlyphs">Total</text>
<text x="308.3" y="453.8" font-size="10.4" fill="#1e1e1e" stroke="#1e1e1e" stroke-width="0.22" textLength="41.13" lengthAdjust="spacingAndGlyphs">Windows</text>
<text x="368.2" y="453.8" font-size="10.4" fill="#1e1e1e" stroke="#1e1e1e" stroke-width="0.22" textLength="28.18" lengthAdjust="spacingAndGlyphs">Dallas</text>
<text x="449" y="453.8" font-size="10.4" fill="#1e1e1e" stroke="#1e1e1e" stroke-width="0.22" textLength="39.46" lengthAdjust="spacingAndGlyphs">1083-AX</text>
<text x="525.4" y="453.8" font-size="10.4" fill="#1e1e1e" stroke="#1e1e1e" stroke-width="0.22" textLength="42.28" lengthAdjust="spacingAndGlyphs">2020-Jan</text>
<text x="575.4" y="453.8" font-size="10.4" fill="#1e1e1e" stroke="#1e1e1e" stroke-width="0.22" textLength="5.64" lengthAdjust="spacingAndGlyphs">6</text>
<text x="622.6" y="453.8" font-size="10.4" fill="#1e1e1e" stroke="#1e1e1e" stroke-width="0.22" textLength="25.37" lengthAdjust="spacingAndGlyphs">7,419</text>
<text x="702.4" y="453.8" font-size="10.4" fill="#1e1e1e" stroke="#1e1e1e" stroke-width="0.22" textLength="28.75" lengthAdjust="spacingAndGlyphs">-7,413</text>
<text x="751.9" y="453.8" font-size="10.4" fill="#1e1e1e" stroke="#1e1e1e" stroke-width="0.22" textLength="40.58" lengthAdjust="spacingAndGlyphs">Detected</text>
<rect x="266" y="458.1" width="532" height="15" fill="#f5f5fb"/>
<text x="268.2" y="468.8" font-size="10.4" fill="#1e1e1e" stroke="#1e1e1e" stroke-width="0.22" textLength="22.54" lengthAdjust="spacingAndGlyphs">Total</text>
<text x="308.3" y="468.8" font-size="10.4" fill="#1e1e1e" stroke="#1e1e1e" stroke-width="0.22" textLength="41.13" lengthAdjust="spacingAndGlyphs">Windows</text>
<text x="368.2" y="468.8" font-size="10.4" fill="#1e1e1e" stroke="#1e1e1e" stroke-width="0.22" textLength="67.08" lengthAdjust="spacingAndGlyphs">Chicago-South</text>
<text x="449" y="468.8" font-size="10.4" fill="#1e1e1e" stroke="#1e1e1e" stroke-width="0.22" textLength="56.38" lengthAdjust="spacingAndGlyphs">1429603-AX</text>
<text x="525.4" y="468.8" font-size="10.4" fill="#1e1e1e" stroke="#1e1e1e" stroke-width="0.22" textLength="41.71" lengthAdjust="spacingAndGlyphs">2019-Oct</text>
<text x="575.4" y="468.8" font-size="10.4" fill="#1e1e1e" stroke="#1e1e1e" stroke-width="0.22" textLength="31.01" lengthAdjust="spacingAndGlyphs">13,987</text>
<text x="622.6" y="468.8" font-size="10.4" fill="#1e1e1e" stroke="#1e1e1e" stroke-width="0.22" textLength="25.37" lengthAdjust="spacingAndGlyphs">8,452</text>
<text x="702.4" y="468.8" font-size="10.4" fill="#1e1e1e" stroke="#1e1e1e" stroke-width="0.22" textLength="25.37" lengthAdjust="spacingAndGlyphs">5,535</text>
<text x="751.9" y="468.8" font-size="10.4" fill="#1e1e1e" stroke="#1e1e1e" stroke-width="0.22" textLength="40.58" lengthAdjust="spacingAndGlyphs">Detected</text>
<rect x="266" y="473.1" width="532" height="15" fill="#dcdcdc"/>
<text x="268.2" y="483.8" font-size="10.4" fill="#1e1e1e" stroke="#1e1e1e" stroke-width="0.22" textLength="22.54" lengthAdjust="spacingAndGlyphs">Total</text>
<text x="308.3" y="483.8" font-size="10.4" fill="#1e1e1e" stroke="#1e1e1e" stroke-width="0.22" textLength="41.13" lengthAdjust="spacingAndGlyphs">Windows</text>
<text x="368.2" y="483.8" font-size="10.4" fill="#1e1e1e" stroke="#1e1e1e" stroke-width="0.22" textLength="67.08" lengthAdjust="spacingAndGlyphs">Chicago-South</text>
<text x="449" y="483.8" font-size="10.4" fill="#1e1e1e" stroke="#1e1e1e" stroke-width="0.22" textLength="50.74" lengthAdjust="spacingAndGlyphs">441496-AX</text>
<text x="525.4" y="483.8" font-size="10.4" fill="#1e1e1e" stroke="#1e1e1e" stroke-width="0.22" textLength="43.97" lengthAdjust="spacingAndGlyphs">2019-Nov</text>
<text x="575.4" y="483.8" font-size="10.4" fill="#1e1e1e" stroke="#1e1e1e" stroke-width="0.22" textLength="25.37" lengthAdjust="spacingAndGlyphs">6,000</text>
<text x="622.6" y="483.8" font-size="10.4" fill="#1e1e1e" stroke="#1e1e1e" stroke-width="0.22" textLength="25.37" lengthAdjust="spacingAndGlyphs">1,067</text>
<text x="702.4" y="483.8" font-size="10.4" fill="#1e1e1e" stroke="#1e1e1e" stroke-width="0.22" textLength="25.37" lengthAdjust="spacingAndGlyphs">4,933</text>
<text x="751.9" y="483.8" font-size="10.4" fill="#1e1e1e" stroke="#1e1e1e" stroke-width="0.22" textLength="40.58" lengthAdjust="spacingAndGlyphs">Detected</text>
<rect x="266" y="488.1" width="532" height="15" fill="#f5f5fb"/>
<text x="268.2" y="498.8" font-size="10.4" fill="#1e1e1e" stroke="#1e1e1e" stroke-width="0.22" textLength="22.54" lengthAdjust="spacingAndGlyphs">Total</text>
<text x="308.3" y="498.8" font-size="10.4" fill="#1e1e1e" stroke="#1e1e1e" stroke-width="0.22" textLength="41.13" lengthAdjust="spacingAndGlyphs">Windows</text>
<text x="368.2" y="498.8" font-size="10.4" fill="#1e1e1e" stroke="#1e1e1e" stroke-width="0.22" textLength="43.95" lengthAdjust="spacingAndGlyphs">New York</text>
<text x="449" y="498.8" font-size="10.4" fill="#1e1e1e" stroke="#1e1e1e" stroke-width="0.22" textLength="56.38" lengthAdjust="spacingAndGlyphs">1421367-AX</text>
<text x="525.4" y="498.8" font-size="10.4" fill="#1e1e1e" stroke="#1e1e1e" stroke-width="0.22" textLength="41.71" lengthAdjust="spacingAndGlyphs">2018-Apr</text>
<text x="575.4" y="498.8" font-size="10.4" fill="#1e1e1e" stroke="#1e1e1e" stroke-width="0.22" textLength="25.37" lengthAdjust="spacingAndGlyphs">1,525</text>
<text x="622.6" y="498.8" font-size="10.4" fill="#1e1e1e" stroke="#1e1e1e" stroke-width="0.22" textLength="11.28" lengthAdjust="spacingAndGlyphs">88</text>
<text x="702.4" y="498.8" font-size="10.4" fill="#1e1e1e" stroke="#1e1e1e" stroke-width="0.22" textLength="25.37" lengthAdjust="spacingAndGlyphs">1,437</text>
<text x="751.9" y="498.8" font-size="10.4" fill="#1e1e1e" stroke="#1e1e1e" stroke-width="0.22" textLength="40.58" lengthAdjust="spacingAndGlyphs">Detected</text>
<rect x="266" y="503.1" width="532" height="15" fill="#dcdcdc"/>
<text x="268.2" y="513.8" font-size="10.4" fill="#1e1e1e" stroke="#1e1e1e" stroke-width="0.22" textLength="22.54" lengthAdjust="spacingAndGlyphs">Total</text>
<text x="308.3" y="513.8" font-size="10.4" fill="#1e1e1e" stroke="#1e1e1e" stroke-width="0.22" textLength="36.06" lengthAdjust="spacingAndGlyphs">Mufflers</text>
<text x="368.2" y="513.8" font-size="10.4" fill="#1e1e1e" stroke="#1e1e1e" stroke-width="0.22" textLength="28.18" lengthAdjust="spacingAndGlyphs">Dallas</text>
<text x="449" y="513.8" font-size="10.4" fill="#1e1e1e" stroke="#1e1e1e" stroke-width="0.22" textLength="56.38" lengthAdjust="spacingAndGlyphs">5397225-AX</text>
<text x="525.4" y="513.8" font-size="10.4" fill="#1e1e1e" stroke="#1e1e1e" stroke-width="0.22" textLength="42.28" lengthAdjust="spacingAndGlyphs">2020-Jan</text>
<text x="575.4" y="513.8" font-size="10.4" fill="#1e1e1e" stroke="#1e1e1e" stroke-width="0.22" textLength="25.37" lengthAdjust="spacingAndGlyphs">1,136</text>
<text x="622.6" y="513.8" font-size="10.4" fill="#1e1e1e" stroke="#1e1e1e" stroke-width="0.22" textLength="11.28" lengthAdjust="spacingAndGlyphs">21</text>
<text x="702.4" y="513.8" font-size="10.4" fill="#1e1e1e" stroke="#1e1e1e" stroke-width="0.22" textLength="25.37" lengthAdjust="spacingAndGlyphs">1,115</text>
<text x="751.9" y="513.8" font-size="10.4" fill="#1e1e1e" stroke="#1e1e1e" stroke-width="0.22" textLength="40.58" lengthAdjust="spacingAndGlyphs">Detected</text>
<rect x="266" y="518.1" width="532" height="15" fill="#f5f5fb"/>
<text x="268.2" y="528.8" font-size="10.4" fill="#1e1e1e" stroke="#1e1e1e" stroke-width="0.22" textLength="22.54" lengthAdjust="spacingAndGlyphs">Total</text>
<text x="308.3" y="528.8" font-size="10.4" fill="#1e1e1e" stroke="#1e1e1e" stroke-width="0.22" textLength="41.13" lengthAdjust="spacingAndGlyphs">Windows</text>
<text x="368.2" y="528.8" font-size="10.4" fill="#1e1e1e" stroke="#1e1e1e" stroke-width="0.22" textLength="67.08" lengthAdjust="spacingAndGlyphs">Chicago-South</text>
<text x="449" y="528.8" font-size="10.4" fill="#1e1e1e" stroke="#1e1e1e" stroke-width="0.22" textLength="45.1" lengthAdjust="spacingAndGlyphs">50002-AX</text>
<text x="525.4" y="528.8" font-size="10.4" fill="#1e1e1e" stroke="#1e1e1e" stroke-width="0.22" textLength="43.4" lengthAdjust="spacingAndGlyphs">2019-Mar</text>
<text x="575.4" y="528.8" font-size="10.4" fill="#1e1e1e" stroke="#1e1e1e" stroke-width="0.22" textLength="25.37" lengthAdjust="spacingAndGlyphs">1,000</text>
<text x="622.6" y="528.8" font-size="10.4" fill="#1e1e1e" stroke="#1e1e1e" stroke-width="0.22" textLength="16.92" lengthAdjust="spacingAndGlyphs">106</text>
<text x="702.4" y="528.8" font-size="10.4" fill="#1e1e1e" stroke="#1e1e1e" stroke-width="0.22" textLength="16.92" lengthAdjust="spacingAndGlyphs">894</text>
<text x="751.9" y="528.8" font-size="10.4" fill="#1e1e1e" stroke="#1e1e1e" stroke-width="0.22" textLength="40.58" lengthAdjust="spacingAndGlyphs">Detected</text>
<rect x="266" y="533.1" width="532" height="15" fill="#dcdcdc"/>
<text x="268.2" y="543.8" font-size="10.4" fill="#1e1e1e" stroke="#1e1e1e" stroke-width="0.22" textLength="22.54" lengthAdjust="spacingAndGlyphs">Total</text>
<text x="308.3" y="543.8" font-size="10.4" fill="#1e1e1e" stroke="#1e1e1e" stroke-width="0.22" textLength="41.13" lengthAdjust="spacingAndGlyphs">Windows</text>
<text x="368.2" y="543.8" font-size="10.4" fill="#1e1e1e" stroke="#1e1e1e" stroke-width="0.22" textLength="43.95" lengthAdjust="spacingAndGlyphs">New York</text>
<text x="449" y="543.8" font-size="10.4" fill="#1e1e1e" stroke="#1e1e1e" stroke-width="0.22" textLength="56.38" lengthAdjust="spacingAndGlyphs">1420657-AX</text>
<text x="525.4" y="543.8" font-size="10.4" fill="#1e1e1e" stroke="#1e1e1e" stroke-width="0.22" textLength="43.4" lengthAdjust="spacingAndGlyphs">2018-Mar</text>
<text x="575.4" y="543.8" font-size="10.4" fill="#1e1e1e" stroke="#1e1e1e" stroke-width="0.22" textLength="16.92" lengthAdjust="spacingAndGlyphs">925</text>
<text x="622.6" y="543.8" font-size="10.4" fill="#1e1e1e" stroke="#1e1e1e" stroke-width="0.22" textLength="16.92" lengthAdjust="spacingAndGlyphs">105</text>
<text x="702.4" y="543.8" font-size="10.4" fill="#1e1e1e" stroke="#1e1e1e" stroke-width="0.22" textLength="16.92" lengthAdjust="spacingAndGlyphs">820</text>
<text x="751.9" y="543.8" font-size="10.4" fill="#1e1e1e" stroke="#1e1e1e" stroke-width="0.22" textLength="40.58" lengthAdjust="spacingAndGlyphs">Detected</text>
<rect x="266" y="548.1" width="532" height="15" fill="#f5f5fb"/>
<text x="268.2" y="558.8" font-size="10.4" fill="#1e1e1e" stroke="#1e1e1e" stroke-width="0.22" textLength="22.54" lengthAdjust="spacingAndGlyphs">Total</text>
<text x="308.3" y="558.8" font-size="10.4" fill="#1e1e1e" stroke="#1e1e1e" stroke-width="0.22" textLength="41.13" lengthAdjust="spacingAndGlyphs">Windows</text>
<text x="368.2" y="558.8" font-size="10.4" fill="#1e1e1e" stroke="#1e1e1e" stroke-width="0.22" textLength="43.95" lengthAdjust="spacingAndGlyphs">New York</text>
<text x="449" y="558.8" font-size="10.4" fill="#1e1e1e" stroke="#1e1e1e" stroke-width="0.22" textLength="33.82" lengthAdjust="spacingAndGlyphs">SP-406</text>
<text x="525.4" y="558.8" font-size="10.4" fill="#1e1e1e" stroke="#1e1e1e" stroke-width="0.22" textLength="43.4" lengthAdjust="spacingAndGlyphs">2018-Mar</text>
<text x="575.4" y="558.8" font-size="10.4" fill="#1e1e1e" stroke="#1e1e1e" stroke-width="0.22" textLength="16.92" lengthAdjust="spacingAndGlyphs">825</text>
<text x="622.6" y="558.8" font-size="10.4" fill="#1e1e1e" stroke="#1e1e1e" stroke-width="0.22" textLength="5.64" lengthAdjust="spacingAndGlyphs">8</text>
<text x="702.4" y="558.8" font-size="10.4" fill="#1e1e1e" stroke="#1e1e1e" stroke-width="0.22" textLength="16.92" lengthAdjust="spacingAndGlyphs">817</text>
<text x="751.9" y="558.8" font-size="10.4" fill="#1e1e1e" stroke="#1e1e1e" stroke-width="0.22" textLength="40.58" lengthAdjust="spacingAndGlyphs">Detected</text>
<rect x="266" y="563.1" width="532" height="15" fill="#dcdcdc"/>
<text x="268.2" y="573.8" font-size="10.4" fill="#1e1e1e" stroke="#1e1e1e" stroke-width="0.22" textLength="22.54" lengthAdjust="spacingAndGlyphs">Total</text>
<text x="308.3" y="573.8" font-size="10.4" fill="#1e1e1e" stroke="#1e1e1e" stroke-width="0.22" textLength="41.13" lengthAdjust="spacingAndGlyphs">Windows</text>
<text x="368.2" y="573.8" font-size="10.4" fill="#1e1e1e" stroke="#1e1e1e" stroke-width="0.22" textLength="43.95" lengthAdjust="spacingAndGlyphs">New York</text>
<text x="449" y="573.8" font-size="10.4" fill="#1e1e1e" stroke="#1e1e1e" stroke-width="0.22" textLength="56.38" lengthAdjust="spacingAndGlyphs">1420231-AX</text>
<text x="525.4" y="573.8" font-size="10.4" fill="#1e1e1e" stroke="#1e1e1e" stroke-width="0.22" textLength="43.4" lengthAdjust="spacingAndGlyphs">2018-Mar</text>
<text x="575.4" y="573.8" font-size="10.4" fill="#1e1e1e" stroke="#1e1e1e" stroke-width="0.22" textLength="16.92" lengthAdjust="spacingAndGlyphs">823</text>
<text x="622.6" y="573.8" font-size="10.4" fill="#1e1e1e" stroke="#1e1e1e" stroke-width="0.22" textLength="11.28" lengthAdjust="spacingAndGlyphs">11</text>
<text x="702.4" y="573.8" font-size="10.4" fill="#1e1e1e" stroke="#1e1e1e" stroke-width="0.22" textLength="16.92" lengthAdjust="spacingAndGlyphs">812</text>
<text x="751.9" y="573.8" font-size="10.4" fill="#1e1e1e" stroke="#1e1e1e" stroke-width="0.22" textLength="40.58" lengthAdjust="spacingAndGlyphs">Detected</text>
<rect x="266" y="578.1" width="532" height="15" fill="#f5f5fb"/>
<text x="268.2" y="588.8" font-size="10.4" fill="#1e1e1e" stroke="#1e1e1e" stroke-width="0.22" textLength="22.54" lengthAdjust="spacingAndGlyphs">Total</text>
<text x="308.3" y="588.8" font-size="10.4" fill="#1e1e1e" stroke="#1e1e1e" stroke-width="0.22" textLength="41.13" lengthAdjust="spacingAndGlyphs">Windows</text>
<text x="368.2" y="588.8" font-size="10.4" fill="#1e1e1e" stroke="#1e1e1e" stroke-width="0.22" textLength="43.95" lengthAdjust="spacingAndGlyphs">New York</text>
<text x="449" y="588.8" font-size="10.4" fill="#1e1e1e" stroke="#1e1e1e" stroke-width="0.22" textLength="56.38" lengthAdjust="spacingAndGlyphs">1421225-AX</text>
<text x="525.4" y="588.8" font-size="10.4" fill="#1e1e1e" stroke="#1e1e1e" stroke-width="0.22" textLength="43.4" lengthAdjust="spacingAndGlyphs">2018-Mar</text>
<text x="575.4" y="588.8" font-size="10.4" fill="#1e1e1e" stroke="#1e1e1e" stroke-width="0.22" textLength="16.92" lengthAdjust="spacingAndGlyphs">815</text>
<text x="622.6" y="588.8" font-size="10.4" fill="#1e1e1e" stroke="#1e1e1e" stroke-width="0.22" textLength="5.64" lengthAdjust="spacingAndGlyphs">5</text>
<text x="702.4" y="588.8" font-size="10.4" fill="#1e1e1e" stroke="#1e1e1e" stroke-width="0.22" textLength="16.92" lengthAdjust="spacingAndGlyphs">810</text>
<text x="751.9" y="588.8" font-size="10.4" fill="#1e1e1e" stroke="#1e1e1e" stroke-width="0.22" textLength="40.58" lengthAdjust="spacingAndGlyphs">Detected</text>
<rect x="266" y="593.1" width="532" height="15" fill="#dcdcdc"/>
<text x="268.2" y="603.8" font-size="10.4" fill="#1e1e1e" stroke="#1e1e1e" stroke-width="0.22" textLength="22.54" lengthAdjust="spacingAndGlyphs">Total</text>
<text x="308.3" y="603.8" font-size="10.4" fill="#1e1e1e" stroke="#1e1e1e" stroke-width="0.22" textLength="41.13" lengthAdjust="spacingAndGlyphs">Windows</text>
<text x="368.2" y="603.8" font-size="10.4" fill="#1e1e1e" stroke="#1e1e1e" stroke-width="0.22" textLength="43.95" lengthAdjust="spacingAndGlyphs">New York</text>
<text x="449" y="603.8" font-size="10.4" fill="#1e1e1e" stroke="#1e1e1e" stroke-width="0.22" textLength="56.38" lengthAdjust="spacingAndGlyphs">1420373-AX</text>
<text x="525.4" y="603.8" font-size="10.4" fill="#1e1e1e" stroke="#1e1e1e" stroke-width="0.22" textLength="43.4" lengthAdjust="spacingAndGlyphs">2018-Mar</text>
<text x="575.4" y="603.8" font-size="10.4" fill="#1e1e1e" stroke="#1e1e1e" stroke-width="0.22" textLength="16.92" lengthAdjust="spacingAndGlyphs">900</text>
<text x="622.6" y="603.8" font-size="10.4" fill="#1e1e1e" stroke="#1e1e1e" stroke-width="0.22" textLength="11.28" lengthAdjust="spacingAndGlyphs">94</text>
<text x="702.4" y="603.8" font-size="10.4" fill="#1e1e1e" stroke="#1e1e1e" stroke-width="0.22" textLength="16.92" lengthAdjust="spacingAndGlyphs">806</text>
<text x="751.9" y="603.8" font-size="10.4" fill="#1e1e1e" stroke="#1e1e1e" stroke-width="0.22" textLength="40.58" lengthAdjust="spacingAndGlyphs">Detected</text>
<path d="M730.4,416.3 V425 M728.4,422.6 L730.4,425.3 L732.4,422.6" fill="none" stroke="#55558a" stroke-width="0.9"/>
<rect x="621.3" y="473.6" width="79.8" height="15.4" fill="none" stroke="#111" stroke-width="1.9"/>
<rect x="699.4" y="487.6" width="3.2" height="3.2" fill="#111"/>
</g>
<rect x="1168" y="413.2" width="14.7" height="189.2" fill="#f0f0f0"/>
<rect x="1168" y="429.2" width="14.7" height="15.6" fill="#cdcdcd"/>
<path d="M1171.5,423.6 L1174.7,420 L1177.9,423.6" fill="none" stroke="#555" stroke-width="1.5"/>
<path d="M1171.5,592.6 L1174.7,596.4 L1177.9,592.6" fill="none" stroke="#555" stroke-width="1.5"/>
<rect x="0" y="618" width="1200" height="18" fill="#f0f0f0"/>
<text x="3.6" y="632.6" font-size="10.6" fill="#444" stroke="#444" stroke-width="0.12" textLength="217.5" lengthAdjust="spacingAndGlyphs">Average: 1,067 Count: 1 Unique: 1 Sum: 1,067</text>
<rect x="880.3" y="623.5" width="13.2" height="12" fill="#3ab3c4"/>
<rect x="880.3" y="623.5" width="13.2" height="2.6" fill="#3a4aa8"/>
<rect x="881.5" y="622.3" width="1.1" height="2.2" fill="#3a4aa8"/>
<rect x="884.6" y="622.3" width="1.1" height="2.2" fill="#3a4aa8"/>
<rect x="887.7" y="622.3" width="1.1" height="2.2" fill="#3a4aa8"/>
<rect x="890.8" y="622.3" width="1.1" height="2.2" fill="#3a4aa8"/>
<rect x="881.6" y="627.3" width="2.1" height="1.9" fill="#e6f6f8"/>
<rect x="884.65" y="627.3" width="2.1" height="1.9" fill="#e6f6f8"/>
<rect x="887.7" y="627.3" width="2.1" height="1.9" fill="#e6f6f8"/>
<rect x="890.75" y="627.3" width="2.1" height="1.9" fill="#e6f6f8"/>
<rect x="881.6" y="630.05" width="2.1" height="1.9" fill="#e6f6f8"/>
<rect x="884.65" y="630.05" width="2.1" height="1.9" fill="#e6f6f8"/>
<rect x="887.7" y="630.05" width="2.1" height="1.9" fill="#e6f6f8"/>
<rect x="890.75" y="630.05" width="2.1" height="1.9" fill="#e6f6f8"/>
<rect x="881.6" y="632.8" width="2.1" height="1.9" fill="#e6f6f8"/>
<rect x="884.65" y="632.8" width="2.1" height="1.9" fill="#e6f6f8"/>
<rect x="887.7" y="632.8" width="2.1" height="1.9" fill="#e6f6f8"/>
<rect x="890.75" y="632.8" width="2.1" height="1.9" fill="#e6f6f8"/>
<text x="897" y="632.3" font-size="10.8" fill="#444" stroke="#444" stroke-width="0.12" textLength="98.6" lengthAdjust="spacingAndGlyphs">2017-Jun - 2020-May</text>
<rect x="1002.2" y="622.3" width="5.8" height="3" fill="#3a4aa8"/>
<line x1="1004.6" y1="625.3" x2="1004.6" y2="634.5" stroke="#888" stroke-width="1"/>
<rect x="1006.5" y="627.6" width="8.8" height="2.6" fill="#3a6fc0"/>
<rect x="1006.5" y="632.3" width="8.8" height="2.6" fill="#3a6fc0"/>
<line x1="1004.6" y1="628.9" x2="1006.5" y2="628.9" stroke="#888" stroke-width="1"/>
<line x1="1004.6" y1="633.6" x2="1006.5" y2="633.6" stroke="#888" stroke-width="1"/>
<text x="1019.4" y="632.3" font-size="10.8" fill="#444" stroke="#444" stroke-width="0.12" textLength="81.2" lengthAdjust="spacingAndGlyphs">Hierarchy 1-2-3-4</text>
<path d="M1107.5,631.3 l8,-8 l4,4 l-8,8 z" fill="none" stroke="#666" stroke-width="1.1"/>
<path d="M1110.5,630.3 l1.5,1.5 M1112.5,628.3 l1.5,1.5 M1114.5,626.3 l1.5,1.5" stroke="#666" stroke-width="0.9"/>
<text x="1124" y="632.3" font-size="10.8" fill="#444" stroke="#444" stroke-width="0.12" textLength="66.2" lengthAdjust="spacingAndGlyphs">Units: Default</text>
</svg></body></html>
